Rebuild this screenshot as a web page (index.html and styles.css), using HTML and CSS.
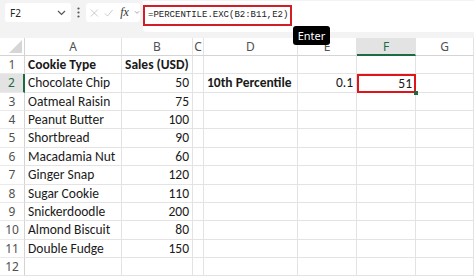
FILE: index.html
```html
<!DOCTYPE html>
<html lang="en">
<head>
  <meta charset="UTF-8">
  <title>PERCENTILE.EXC</title>
  <link rel="stylesheet" href="styles.css">
</head>
<body>
  <div class="barra">
    <div class="namebox">
      <span>F2</span>
      <svg class="chev" width="9" height="6" viewBox="0 0 9 6"><path d="M1 1l3.5 3.5L8 1" fill="none" stroke="#555" stroke-width="1.2"/></svg>
    </div>
    <div class="dots">
      <svg width="3" height="11" viewBox="0 0 3 11"><circle cx="1.5" cy="1.5" r="1.1" fill="#555"/><circle cx="1.5" cy="5.5" r="1.1" fill="#555"/><circle cx="1.5" cy="9.5" r="1.1" fill="#555"/></svg>
    </div>
    <div class="fnbox">
      <svg width="10" height="10" viewBox="0 0 10 10"><path d="M1 1l8 8M9 1l-8 8" stroke="#c8c8c8" stroke-width="1.1"/></svg>
      <svg width="11" height="10" viewBox="0 0 11 10"><path d="M1 5.5l3 3L10 1.5" fill="none" stroke="#c8c8c8" stroke-width="1.1"/></svg>
      <span class="fx">fx</span>
      <svg width="7" height="5" viewBox="0 0 7 5"><path d="M1 1l2.5 2.5L6 1" fill="none" stroke="#999" stroke-width="1"/></svg>
    </div>
    <div class="formula">
      <span class="destaque">=PERCENTILE.EXC(B2:B11,E2)</span>
    </div>
  </div>

  <div class="planilha">
    <div class="canto"><svg width="13" height="13" viewBox="0 0 13 13"><path d="M13 0v13H0z" fill="#d6d6d6"/></svg></div>
    <div class="cab">A</div>
    <div class="cab">B</div>
    <div class="cab">C</div>
    <div class="cab">D</div>
    <div class="cab">E</div>
    <div class="cab ativo">F</div>
    <div class="cab">G</div>

    <div class="num">1</div><div class="c b">Cookie Type</div><div class="c b">Sales (USD)</div><div class="c"></div><div class="c"></div><div class="c"></div><div class="c"></div><div class="c"></div>
    <div class="num ativo">2</div><div class="c">Chocolate Chip</div><div class="c r">50</div><div class="c"></div><div class="c b">10th Percentile</div><div class="c r">0.1</div><div class="c r sel">51</div><div class="c"></div>
    <div class="num">3</div><div class="c">Oatmeal Raisin</div><div class="c r">75</div><div class="c"></div><div class="c"></div><div class="c"></div><div class="c"></div><div class="c"></div>
    <div class="num">4</div><div class="c">Peanut Butter</div><div class="c r">100</div><div class="c"></div><div class="c"></div><div class="c"></div><div class="c"></div><div class="c"></div>
    <div class="num">5</div><div class="c">Shortbread</div><div class="c r">90</div><div class="c"></div><div class="c"></div><div class="c"></div><div class="c"></div><div class="c"></div>
    <div class="num">6</div><div class="c">Macadamia Nut</div><div class="c r">60</div><div class="c"></div><div class="c"></div><div class="c"></div><div class="c"></div><div class="c"></div>
    <div class="num">7</div><div class="c">Ginger Snap</div><div class="c r">120</div><div class="c"></div><div class="c"></div><div class="c"></div><div class="c"></div><div class="c"></div>
    <div class="num">8</div><div class="c">Sugar Cookie</div><div class="c r">110</div><div class="c"></div><div class="c"></div><div class="c"></div><div class="c"></div><div class="c"></div>
    <div class="num">9</div><div class="c">Snickerdoodle</div><div class="c r">200</div><div class="c"></div><div class="c"></div><div class="c"></div><div class="c"></div><div class="c"></div>
    <div class="num">10</div><div class="c">Almond Biscuit</div><div class="c r">80</div><div class="c"></div><div class="c"></div><div class="c"></div><div class="c"></div><div class="c"></div>
    <div class="num">11</div><div class="c">Double Fudge</div><div class="c r">150</div><div class="c"></div><div class="c"></div><div class="c"></div><div class="c"></div><div class="c"></div>
    <div class="num">12</div><div class="c"></div><div class="c"></div><div class="c"></div><div class="c"></div><div class="c"></div><div class="c"></div><div class="c"></div>
  </div>

  <div class="dica">Enter</div>
</body>
</html>
```

FILE: styles.css
```css
* { box-sizing: border-box; }
body, html {
  margin: 0;
  height: 100%;
  overflow: hidden;
  background: #fff;
  font-family: Carlito, Calibri, Lato, sans-serif;
}

.barra {
  display: flex;
  align-items: flex-start;
  height: 38px;
  background: #f3f3f3;
  padding-top: 3px;
  padding-left: 5px;
}

.namebox {
  width: 66px;
  height: 19px;
  background: #fff;
  border-radius: 3px;
  display: flex;
  align-items: center;
  justify-content: space-between;
  padding: 0 5px 0 5px;
  font-family: "Noto Sans", sans-serif;
  font-size: 10px;
  color: #222;
}

.dots {
  width: 15px;
  height: 19px;
  display: flex;
  align-items: center;
  justify-content: center;
}

.fnbox {
  width: 54px;
  height: 19px;
  background: #fff;
  border-radius: 3px;
  display: flex;
  align-items: center;
  gap: 5px;
  padding-left: 4px;
}

.fx {
  font-family: "Liberation Serif", serif;
  font-style: italic;
  font-size: 12px;
  color: #333;
  margin-left: 2px;
}

.formula {
  flex: 1;
  height: 31px;
  margin-left: 3px;
  margin-top: -2px;
  background: #fff;
  border-radius: 0 0 0 4px;
  padding-top: 1px;
}

.destaque {
  display: inline-block;
  width: 149px;
  height: 21px;
  border: 2px solid #d21f26;
  padding-left: 3px;
  font-family: "Liberation Mono", monospace;
  font-size: 9px;
  line-height: 17px;
  color: #222;
}

.planilha {
  display: grid;
  grid-template-columns: 25px 97px 71px 11px 94px 59px 59px 58px;
  grid-template-rows: 18px;
  grid-auto-rows: 18.36px;
}

.canto {
  display: flex;
  align-items: flex-end;
  justify-content: flex-end;
  padding: 0 2px 2px 0;
  border-right: 1px solid #d4d4d4;
  border-bottom: 1px solid #d4d4d4;
}

.cab {
  text-align: center;
  color: #505050;
  font-family: "Noto Sans", sans-serif;
  font-size: 12px;
  line-height: 17px;
  border-right: 1px solid #e3e3e3;
  border-bottom: 1px solid #d4d4d4;
}

.cab.ativo {
  background: #e3e3e3;
  color: #1d6b40;
  border-bottom: 2px solid #1d6b40;
}

.num {
  text-align: center;
  color: #505050;
  font-family: "Noto Sans", sans-serif;
  font-size: 12px;
  line-height: 18px;
  border-right: 1px solid #d4d4d4;
  border-bottom: 1px solid #eaeaea;
}

.num.ativo {
  background: #e3e3e3;
  color: #1d6b40;
  border-right: 2px solid #1d6b40;
}

.c {
  font-size: 13.5px;
  line-height: 18px;
  color: #1a1a1a;
  padding: 0 3px;
  white-space: nowrap;
  border-right: 1px solid #e3e3e3;
  border-bottom: 1px solid #e3e3e3;
}

.b { font-weight: bold; }
.r { text-align: right; }

.sel {
  position: relative;
  border: 2px solid #e0141b;
  line-height: 15px;
  padding-right: 2px;
}

.sel::after {
  content: "";
  position: absolute;
  right: -4px;
  bottom: -4px;
  width: 4px;
  height: 4px;
  background: #1d6b40;
}

.dica {
  position: absolute;
  left: 293px;
  top: 26px;
  width: 37px;
  height: 19px;
  background: #000;
  color: #fff;
  border-radius: 3px;
  font-family: "Noto Sans", sans-serif;
  font-size: 11px;
  line-height: 19px;
  text-align: center;
}
```
